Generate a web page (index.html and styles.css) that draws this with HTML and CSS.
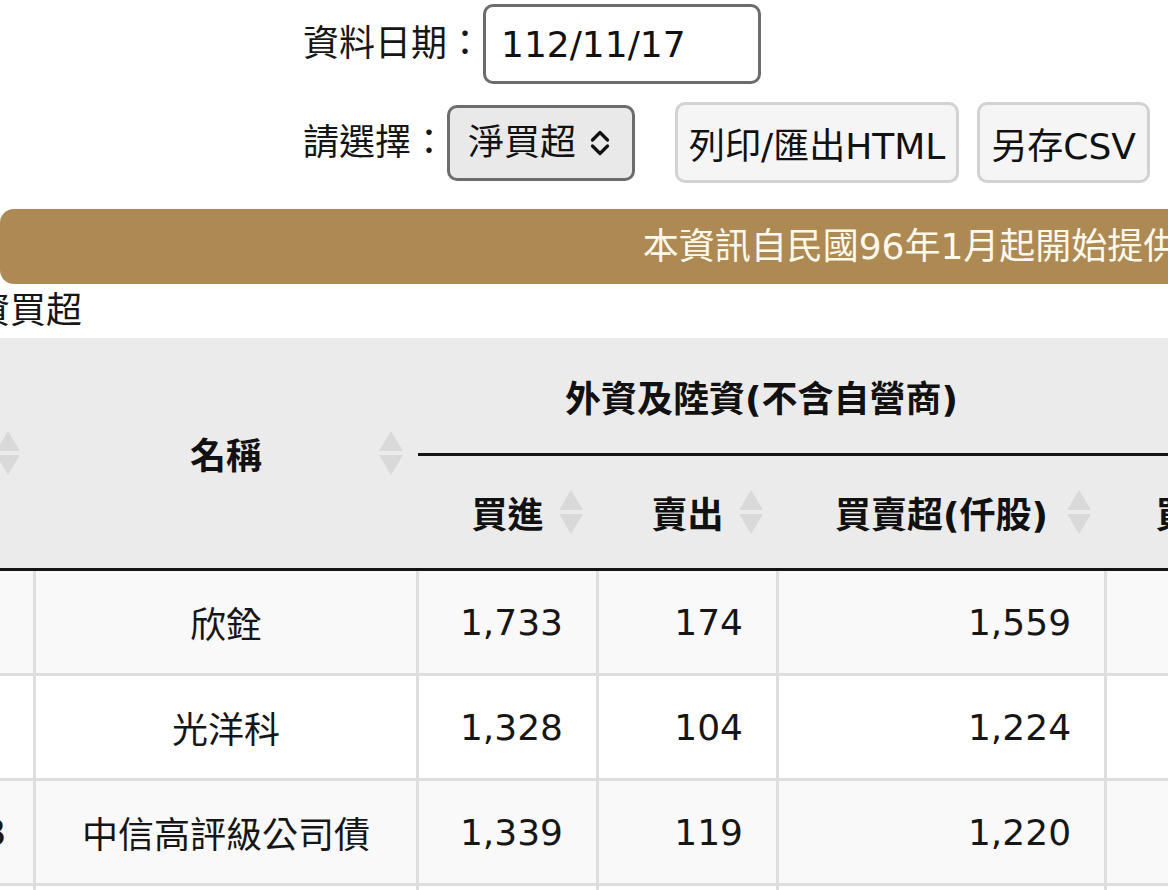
FILE: index.html
```html
<!DOCTYPE html>
<html lang="zh-Hant">
<head>
    <meta charset="UTF-8">
    <meta name="viewport" content="width=device-width, initial-scale=1.0">
    <title>外資及陸資買賣超彙總表</title>
    <link rel="stylesheet" href="styles.css">
</head>
<body>

<!-- Query Form -->
<form class="query">
    <div class="query-row">
        <label class="query-label" for="date">資料日期：</label>
        <input class="date-input" id="date" type="text" value="112/11/17">
    </div>
    <div class="query-row">
        <label class="query-label" for="selectType">請選擇：</label>
        <div class="select-container">
            <select class="type-select" id="selectType">
                <option value="buy">淨買超</option>
                <option value="sell">淨賣超</option>
            </select>
            <svg class="select-arrow" viewBox="0 0 20 28">
                <path d="M2.5 11 L10 3.5 L17.5 11 M2.5 17 L10 24.5 L17.5 17" fill="none" stroke="#111" stroke-width="3.2" stroke-linecap="round" stroke-linejoin="round"/>
            </svg>
        </div>
        <button type="button" class="btn btn-print">列印/匯出HTML</button>
        <button type="button" class="btn btn-csv">另存CSV</button>
    </div>
</form>

<div class="notice">本資訊自民國96年1月起開始提供</div>

<h2 class="report-title">外資及陸資買超</h2>

<!-- Report Table -->
<div class="table-wrap">
    <table class="report-table">
        <colgroup>
            <col class="col-code">
            <col class="col-name">
            <col class="col-num">
            <col class="col-num">
            <col class="col-net">
            <col class="col-next">
            <col class="col-next">
            <col class="col-next-net">
        </colgroup>
        <thead>
            <tr class="head-group">
                <th rowspan="2" class="sortable span-row">代號</th>
                <th rowspan="2" class="sortable span-row">名稱</th>
                <th colspan="3" class="group">外資及陸資(不含自營商)</th>
                <th colspan="3" class="group">投信</th>
            </tr>
            <tr class="head-sub">
                <th class="sortable">買進</th>
                <th class="sortable">賣出</th>
                <th class="sortable">買賣超(仟股)</th>
                <th class="sortable">買進</th>
                <th class="sortable">賣出</th>
                <th class="sortable">買賣超(仟股)</th>
            </tr>
        </thead>
        <tbody>
            <tr>
                <td class="code">3264</td>
                <td class="name">欣銓</td>
                <td>1,733</td>
                <td>174</td>
                <td>1,559</td>
                <td>0</td>
                <td>0</td>
                <td>0</td>
            </tr>
            <tr>
                <td class="code">1785</td>
                <td class="name">光洋科</td>
                <td>1,328</td>
                <td>104</td>
                <td>1,224</td>
                <td>0</td>
                <td>0</td>
                <td>0</td>
            </tr>
            <tr>
                <td class="code">00772B</td>
                <td class="name">中信高評級公司債</td>
                <td>1,339</td>
                <td>119</td>
                <td>1,220</td>
                <td>0</td>
                <td>0</td>
                <td>0</td>
            </tr>
            <tr>
                <td class="code">2409</td>
                <td class="name">友達</td>
                <td>1,275</td>
                <td>86</td>
                <td>1,189</td>
                <td>0</td>
                <td>0</td>
                <td>0</td>
            </tr>
        </tbody>
    </table>
</div>

</body>
</html>
```

FILE: styles.css
```css
/* CSS */
body {
    margin: 0;
    overflow: hidden;
    background: #fff;
    color: #161616;
    font-family: "DejaVu Sans", "Noto Sans CJK TC", sans-serif;
    font-size: 36px;
}

/* Query form */
.query {
    padding: 4px 0 0 303px;
}

.query-row {
    display: flex;
    align-items: center;
}

.query-row + .query-row {
    margin-top: 18px;
}

.query-label {
    line-height: 1;
}

.date-input {
    width: 278px;
    height: 80px;
    box-sizing: border-box;
    padding: 0 15px;
    border: 3px solid #6c6c6c;
    border-radius: 10px;
    background: #fff;
    color: #111;
    font: inherit;
}

.select-container {
    position: relative;
}

.type-select {
    appearance: none;
    -webkit-appearance: none;
    width: 188px;
    height: 76px;
    box-sizing: border-box;
    padding: 0 0 0 18px;
    border: 3px solid #6c6c6c;
    border-radius: 10px;
    background: #e9e9e9;
    color: #111;
    font: inherit;
}

.select-arrow {
    position: absolute;
    right: 25px;
    top: 50%;
    width: 20px;
    height: 28px;
    transform: translateY(-50%);
    pointer-events: none;
}

.btn {
    height: 81px;
    box-sizing: border-box;
    padding: 0 11px;
    border: 3px solid #d2d2d2;
    border-radius: 10px;
    background: #f5f5f5;
    color: #111;
    font: inherit;
}

.btn-print {
    margin-left: 40px;
}

.btn-csv {
    margin-left: 18px;
}

/* Notice bar */
.notice {
    width: 1822px;
    height: 75px;
    margin-top: 26px;
    border-radius: 14px;
    background: #ad8a53;
    color: #fff9ec;
    line-height: 75px;
    text-align: center;
}

.report-title {
    margin: 0 0 0 -170px;
    font-size: 36px;
    font-weight: 400;
    line-height: 54px;
    white-space: nowrap;
}

/* Table */
.table-wrap {
    margin-left: -161px;
}

.report-table {
    width: 1784px;
    border-collapse: collapse;
    table-layout: fixed;
}

.col-code { width: 194px; }
.col-name { width: 383px; }
.col-num { width: 180px; }
.col-net { width: 328px; }
.col-next { width: 160px; }
.col-next-net { width: 200px; }

.report-table th {
    position: relative;
    padding: 0 50px;
    background: #ebebeb;
    color: #111;
    font-weight: 700;
    text-align: center;
    vertical-align: middle;
    white-space: nowrap;
}

.head-group th {
    height: 115px;
}

.head-sub th {
    height: 112px;
}

.report-table th.group,
.report-table th.span-row,
.head-sub th {
    border-bottom: 3px solid #151515;
}

.sortable::before,
.sortable::after {
    content: "";
    position: absolute;
    right: 15px;
    top: 50%;
    border-left: 12px solid transparent;
    border-right: 12px solid transparent;
}

.sortable::before {
    margin-top: -22px;
    border-bottom: 20px solid #d9d9d9;
}

.sortable::after {
    margin-top: 2px;
    border-top: 20px solid #d9d9d9;
}

.report-table td {
    height: 102px;
    padding: 0 33px;
    border: 3px solid #dedede;
    background: #fff;
    text-align: right;
    white-space: nowrap;
}

.report-table tbody tr:nth-child(odd) td {
    background: #f9f9f9;
}

.report-table td.name {
    text-align: center;
}

.report-table td.code {
    padding: 0 41px 0 25px;
    text-align: center;
}
```
